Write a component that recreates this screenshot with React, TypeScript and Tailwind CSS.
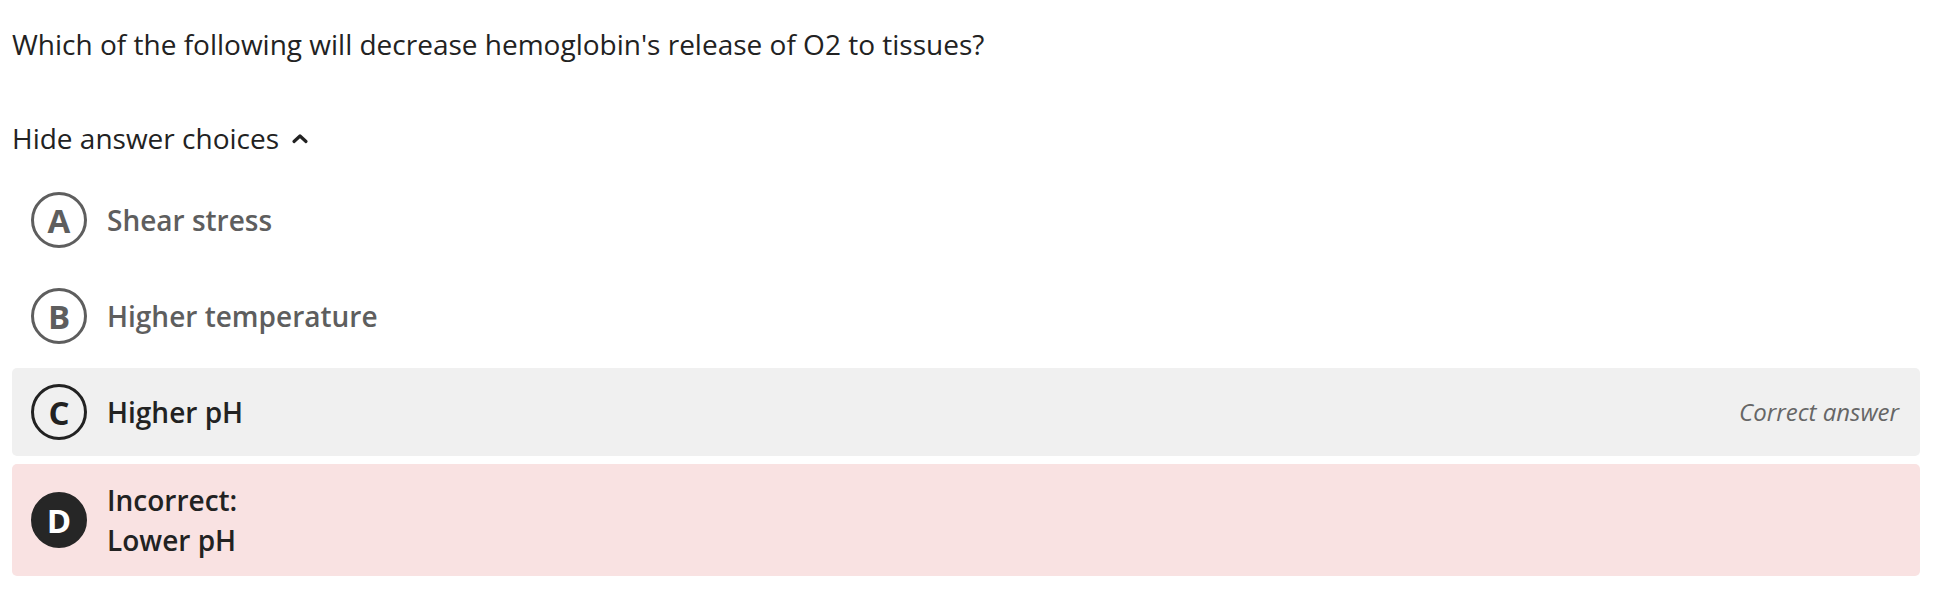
import { ReactNode } from "react";

type Choice = {
    letter: string;
    text: ReactNode;
    state: "plain" | "correct" | "wrong";
};

const choices: Choice[] = [
    { letter: "A", text: "Shear stress", state: "plain" },
    { letter: "B", text: "Higher temperature", state: "plain" },
    { letter: "C", text: "Higher pH", state: "correct" },
    {
        letter: "D",
        text: (
            <>
                <span className="block">Incorrect:</span>
                <span className="block">Lower pH</span>
            </>
        ),
        state: "wrong",
    },
];

function ChoiceRow({ choice }: { choice: Choice }) {
    const boxStyle =
        choice.state === "correct" ? "bg-[#f0f0f0]" : choice.state === "wrong" ? "bg-[#f9e2e2]" : "bg-transparent";

    const circleStyle =
        choice.state === "wrong"
            ? "bg-[#262626] text-white border-[#262626]"
            : choice.state === "correct"
              ? "border-[#222222] text-[#222222]"
              : "border-[#5e5e5e] text-[#5e5e5e]";

    const textColor = choice.state === "plain" ? "text-[#5e5e5e]" : "text-[#222222]";

    return (
        <div className={`flex items-center rounded-[5px] pl-[19px] pr-[21px] py-[16px] ${boxStyle}`}>
            <div
                className={`flex h-[56px] w-[56px] shrink-0 items-center justify-center rounded-full border-[3px] text-[33px] font-bold leading-none ${circleStyle}`}
            >
                {choice.letter}
            </div>
            <div className={`ml-[20px] flex-1 text-[28px] font-semibold leading-[40px] ${textColor}`}>{choice.text}</div>
            {choice.state === "correct" && (
                <span className="text-[24px] italic text-[#666666]">Correct answer</span>
            )}
        </div>
    );
}

export default function App() {
    return (
        <div className="min-h-screen bg-white pl-3 pr-[26px] pt-[24px] font-['Open_Sans',sans-serif] text-[#222222]">
            <p className="text-[28px] leading-[40px]">
                Which of the following will decrease hemoglobin's release of O2 to tissues?
            </p>

            {/* Toggle */}
            <button className="mt-[54px] flex items-center text-[28px] leading-[40px] text-[#222222]">
                Hide answer choices
                <svg className="ml-[12px] h-[14px] w-[18px]" viewBox="0 0 18 14" fill="none">
                    <path d="M3 10.5 9 5l6 5.5" stroke="#222222" strokeWidth="3.2" strokeLinecap="round" strokeLinejoin="round" />
                </svg>
            </button>

            {/* Choices */}
            <div className="mt-[18px] flex flex-col gap-2">
                {choices.map((c) => (
                    <ChoiceRow key={c.letter} choice={c} />
                ))}
            </div>
        </div>
    );
}
